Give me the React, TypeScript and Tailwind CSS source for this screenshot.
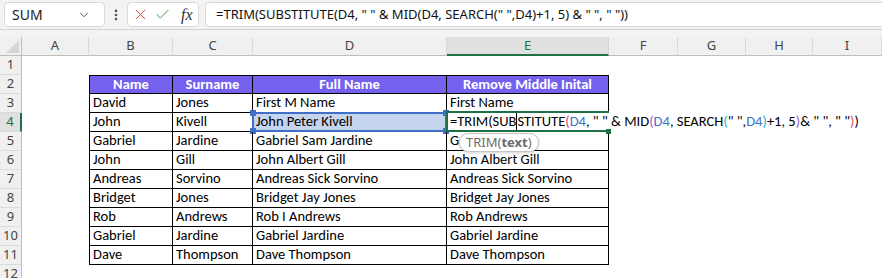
import { ChevronDown, EllipsisVertical, X, Check } from 'lucide-react'

const colLetters = ['A', 'B', 'C', 'D', 'E', 'F', 'G', 'H', 'I']

// Name, Surname, Full Name, Remove Middle Inital
const rows: string[][] = [
  ['David', 'Jones', 'First M Name', 'First Name'],
  ['John', 'Kivell', 'John Peter Kivell', ''],
  ['Gabriel', 'Jardine', 'Gabriel Sam Jardine', 'Gabriel Jardine'],
  ['John', 'Gill', 'John Albert Gill', 'John Albert Gill'],
  ['Andreas', 'Sorvino', 'Andreas Sick Sorvino', 'Andreas Sick Sorvino'],
  ['Bridget', 'Jones', 'Bridget Jay Jones', 'Bridget Jay Jones'],
  ['Rob', 'Andrews', 'Rob I Andrews', 'Rob Andrews'],
  ['Gabriel', 'Jardine', 'Gabriel Jardine', 'Gabriel Jardine'],
  ['Dave', 'Thompson', 'Dave Thompson', 'Dave Thompson'],
]

const headers = ['Name', 'Surname', 'Full Name', 'Remove Middle Inital']

const cellFont = 'font-[family-name:Carlito,Lato,sans-serif] text-[14.5px] text-black'
const uiFont = 'font-[family-name:Noto_Sans,sans-serif]'

function FormulaText() {
  return (
    <>
      =TRIM(SUB
      <span className="inline-block w-0 h-[18px] border-l border-black align-middle -my-1" />
      STITUTE<span className="text-[#e0457b]">(</span>
      <span className="text-[#3e72c8]">D4</span>, " " &amp; MID<span className="text-[#9b5fd0]">(</span>
      <span className="text-[#3e72c8]">D4</span>, SEARCH<span className="text-[#21b4c7]">(</span>" ",
      <span className="text-[#3e72c8]">D4</span>
      <span className="text-[#21b4c7]">)</span>+1, 5<span className="text-[#9b5fd0]">)</span>{' '}&amp; " ", " "
      <span className="text-[#e0457b]">)</span>)
    </>
  )
}

function TableCell({ row, col }: { row: number; col: number }) {
  // row: sheet row number (2..11), col: 1..4 for B..E
  const border = `border-black border-r border-b ${col === 1 ? 'border-l' : ''} ${row === 2 ? 'border-t' : ''}`
  if (row === 2) {
    return (
      <div className={`${border} bg-[#7462ee] flex items-center justify-center font-bold text-white ${cellFont} !text-white`}>
        {headers[col - 1]}
      </div>
    )
  }
  const text = rows[row - 3][col - 1]
  if (row === 4 && col === 3) {
    return (
      <div className={`${border} relative bg-[#c6d5ee] flex items-center pl-[3px] ${cellFont}`}>
        {text}
        <div className="absolute -left-px -top-px -right-px -bottom-px border-2 border-[#3f6fc6] pointer-events-none" />
        <div className="absolute -left-[3px] -top-[3px] w-[6px] h-[6px] bg-[#3f6fc6]" />
        <div className="absolute -right-[3px] -top-[3px] w-[6px] h-[6px] bg-[#3f6fc6]" />
        <div className="absolute -left-[3px] -bottom-[3px] w-[6px] h-[6px] bg-[#3f6fc6]" />
        <div className="absolute -right-[3px] -bottom-[3px] w-[6px] h-[6px] bg-[#3f6fc6]" />
      </div>
    )
  }
  if (row === 4 && col === 4) {
    return (
      <div className={`${border} relative ${cellFont}`}>
        <div className="absolute left-0 -top-px h-[20px] bg-white whitespace-nowrap pl-[3px] pr-1 flex items-center z-10">
          <FormulaText />
        </div>
        <div className="absolute -left-px -top-[2px] -right-px -bottom-px border-t-2 border-b-2 border-l-2 border-[#1e7145] z-20 pointer-events-none" />
        <div className="absolute -right-[3px] -bottom-[3px] w-[5px] h-[5px] bg-[#1e7145] z-20" />
      </div>
    )
  }
  return (
    <div className={`${border} relative flex items-center pl-[3px] whitespace-nowrap ${cellFont}`}>
      {text}
      {row === 5 && col === 4 && (
        <div className={`absolute left-[12px] top-[1px] h-[19px] px-[6px] flex items-center bg-white border border-[#c4c4c4] rounded-[9px] shadow-[0_1px_3px_rgba(0,0,0,0.18)] text-[13px] text-[#6b6b6b] z-30 ${uiFont}`}>
          TRIM(<span className="font-bold">text</span>)
        </div>
      )}
    </div>
  )
}

export default function App() {
  const sheetRows = Array.from({ length: 12 }, (_, i) => i + 1)

  return (
    <div className="w-[882px] h-[278px] overflow-hidden bg-white">
      {/* formula bar */}
      <div className="h-[30px] bg-[#f3f3f3] border-b border-[#d4d4d4] flex items-center">
        <div className={`ml-[4px] w-[101px] h-[25px] bg-white border border-[#d9d9d9] rounded-[4px] flex items-center justify-between pl-[7px] pr-[13px] text-[14px] text-[#222] ${uiFont}`}>
          <span>SUM</span>
          <ChevronDown size={14} strokeWidth={1.5} className="text-[#444]" />
        </div>
        <div className="w-[22px] flex justify-center">
          <EllipsisVertical size={14} strokeWidth={2.5} className="text-[#555]" />
        </div>
        <div className="w-[72px] h-[25px] bg-white border border-[#d9d9d9] rounded-[4px] flex items-center pl-[4px] gap-[5px]">
          <X size={17} strokeWidth={1.4} className="text-[#e0443e]" />
          <Check size={17} strokeWidth={1.4} className="text-[#3aa34a]" />
          <span className="ml-[5px] font-[family-name:Liberation_Serif,serif] italic text-[16px] text-[#333]">fx</span>
        </div>
        <div className={`ml-[6px] flex-1 h-[25px] bg-white border border-r-0 border-[#d9d9d9] rounded-l-[4px] flex items-center pl-[10px] text-[13px] text-[#111] whitespace-nowrap ${uiFont}`}>
          =TRIM(SUBSTITUTE(D4, " " &amp; MID(D4, SEARCH(" ",D4)+1, 5) &amp; " ", " "))
        </div>
      </div>
      <div className="h-[7px] bg-[#f3f3f3]" />

      {/* sheet grid */}
      <div className="grid grid-cols-[22px_67px_84px_80px_194px_162px_69px_68px_67px_1fr] auto-rows-[19px]">
        {/* column header row */}
        <div className="relative bg-[#f0f0f0] border-b border-r border-[#bdbdbd]">
          <div className="absolute right-[2px] bottom-[2px] w-0 h-0 border-l-[13px] border-l-transparent border-b-[13px] border-b-[#d6d6d6]" />
        </div>
        {colLetters.map((c) =>
          c === 'E' ? (
            <div key={c} className={`bg-[#e0e0e0] border-b-2 border-[#1e7145] border-r border-r-[#d4d4d4] flex items-center justify-center text-[13px] text-[#1e7145] ${uiFont}`}>
              {c}
            </div>
          ) : (
            <div key={c} className={`bg-[#f0f0f0] border-b border-[#bdbdbd] border-r border-r-[#dadada] flex items-center justify-center text-[13px] text-[#444] ${uiFont}`}>
              {c}
            </div>
          )
        )}

        {sheetRows.map((r) => (
          <div key={r} className="contents">
            {r === 4 ? (
              <div className={`bg-[#e0e0e0] border-b border-[#dadada] border-r-2 border-r-[#1e7145] flex items-center justify-center text-[13px] text-[#1e7145] ${uiFont}`}>
                {r}
              </div>
            ) : (
              <div className={`bg-[#f0f0f0] border-b border-[#dadada] border-r border-r-[#bdbdbd] flex items-center justify-center text-[13px] text-[#444] ${uiFont}`}>
                {r}
              </div>
            )}
            {colLetters.map((c, ci) => {
              if (r >= 2 && r <= 11 && ci >= 1 && ci <= 4) {
                return <TableCell key={c} row={r} col={ci} />
              }
              return <div key={c} />
            })}
          </div>
        ))}
      </div>
    </div>
  )
}
